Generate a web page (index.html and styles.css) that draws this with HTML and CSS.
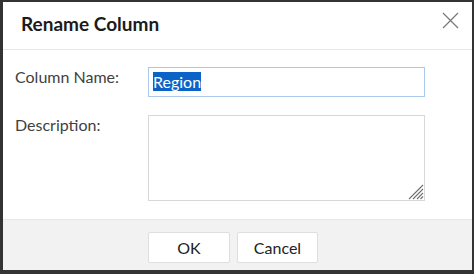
FILE: index.html
```html
<!DOCTYPE html>
<html>
<head>
<meta charset="utf-8">
<link rel="stylesheet" href="styles.css">
</head>
<body>
<div class="dialog">
  <div class="header">
    <div class="title">Rename Column</div>
    <svg class="close" width="17" height="17" viewBox="0 0 17 17">
      <path d="M1 1 L16 16 M16 1 L1 16" stroke="#7a7a7a" stroke-width="1.3" fill="none"/>
    </svg>
  </div>
  <div class="body">
    <div class="label">Column Name:</div>
    <div class="input"><span class="sel">Region</span></div>
    <div class="label">Description:</div>
    <div class="textarea">
      <svg class="grip" width="16" height="16" viewBox="0 0 16 16">
        <path d="M15 1 L1 15 M15 5 L5 15 M15 9 L9 15 M15 12.5 L12.5 15" stroke="#6f6f6f" stroke-width="1.1" fill="none"/>
      </svg>
    </div>
  </div>
  <div class="footer">
    <button class="btn ok">OK</button>
    <button class="btn cancel">Cancel</button>
  </div>
</div>
</body>
</html>
```
FILE: styles.css
```css
html, body {
  margin: 0;
  padding: 0;
  background: #333333;
  width: 474px;
  height: 274px;
  overflow: hidden;
}
.dialog {
  margin: 2px 0 0 3px;
  width: 469px;
  height: 268px;
  background: #ffffff;
  display: flex;
  flex-direction: column;
  font-family: Lato, "Liberation Sans", sans-serif;
}
.header {
  border-bottom: 1px solid #e6e6e6;
  display: flex;
  justify-content: space-between;
  align-items: flex-start;
  padding: 10px 13px 0 18px;
  box-sizing: content-box;
  height: 37px;
}
.title {
  font-size: 19px;
  font-weight: bold;
  color: #1b1b1b;
  line-height: 23px;
}
.close {
  display: block;
}
.body {
  flex: 1;
  display: grid;
  grid-template-columns: 133px 277px;
  grid-template-rows: 30px 86px;
  row-gap: 18px;
  padding: 17px 0 0 12px;
  align-content: start;
}
.label {
  font-size: 16px;
  color: #3f3f3f;
  line-height: 19px;
}
.input {
  box-sizing: border-box;
  height: 30px;
  border: 1px solid #a9caec;
  padding: 4px 0 0 4px;
  font-size: 16px;
  line-height: 19px;
}
.sel {
  background: #0b63c8;
  color: #fff;
  display: inline-block;
  height: 19px;
}
.textarea {
  box-sizing: border-box;
  height: 86px;
  border: 1px solid #d8d8d8;
  position: relative;
}
.grip {
  position: absolute;
  right: 0;
  bottom: 0;
}
.footer {
  border-top: 1px solid #e8e8e8;
  background: #f2f2f2;
  display: flex;
  gap: 7px;
  padding: 12px 0 0 145px;
  box-sizing: border-box;
  height: 51px;
}
.btn {
  height: 31px;
  background: #fff;
  border: 1px solid #dedede;
  border-radius: 2px;
  font-family: Lato, "Liberation Sans", sans-serif;
  font-size: 16px;
  color: #222;
  padding: 0;
}
.ok { width: 82px; }
.cancel { width: 81px; }
```
